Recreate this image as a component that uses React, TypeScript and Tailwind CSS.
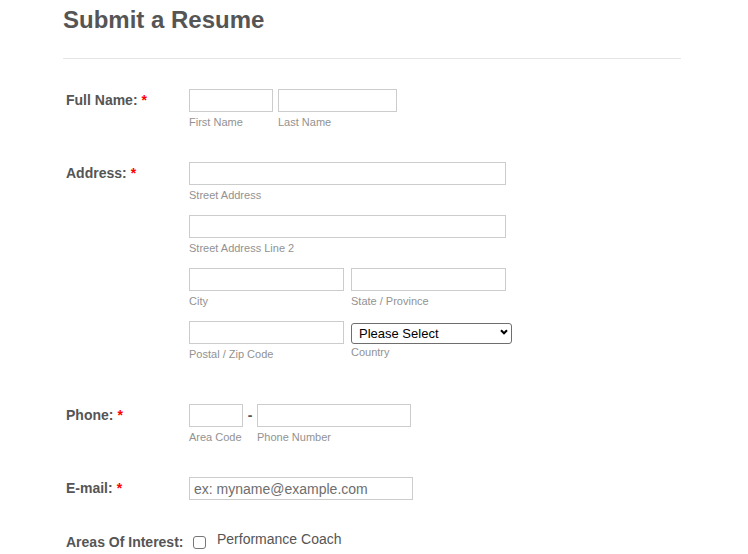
import React from "react";

const Req = () => <span className="text-[#f00] ml-[4px]">*</span>;

const Sub = ({ children, className = "" }: { children: React.ReactNode; className?: string }) => (
  <div className={`text-[11px] leading-[14px] text-[#929292] whitespace-nowrap ${className}`}>{children}</div>
);

const Field = ({ w, label }: { w: string; label: string }) => (
  <div className="flex flex-col">
    <input type="text" className={`${w} h-[23px] border border-[#cccccc] bg-white outline-none`} />
    <Sub className="mt-[3px]">{label}</Sub>
  </div>
);

const Label = ({ children, pt = "pt-[3px]" }: { children: React.ReactNode; pt?: string }) => (
  <div className={`w-[126px] shrink-0 pl-[3px] ${pt} text-[14px] leading-[17px] font-bold text-[#555] whitespace-nowrap`}>
    {children}
  </div>
);

export default function App() {
  return (
    <div className="w-[748px] h-[554px] overflow-hidden bg-white pl-[63px] font-['Liberation_Sans',Arial,sans-serif]">
      <h1 className="pt-[6px] text-[24px] leading-[28px] font-bold text-[#555]">Submit a Resume</h1>
      <div className="mt-[24px] w-[618px] h-px bg-[#e5e5e5]" />

      {/* Full Name */}
      <div className="mt-[30px] flex">
        <Label>
          Full Name:<Req />
        </Label>
        <div className="flex gap-[5px]">
          <Field w="w-[84px]" label="First Name" />
          <Field w="w-[119px]" label="Last Name" />
        </div>
      </div>

      {/* Address */}
      <div className="mt-[33px] flex">
        <Label>
          Address:<Req />
        </Label>
        <div className="flex flex-col gap-[13px]">
          <Field w="w-[317px]" label="Street Address" />
          <Field w="w-[317px]" label="Street Address Line 2" />
          <div className="flex gap-[7px]">
            <Field w="w-[155px]" label="City" />
            <Field w="w-[155px]" label="State / Province" />
          </div>
          <div className="flex gap-[7px] items-start">
            <Field w="w-[155px]" label="Postal / Zip Code" />
            <div className="flex flex-col">
              <div className="relative w-[161px] h-[21px]">
                <select className="appearance-none w-full h-full border border-[#6e6e6e] rounded-[3px] bg-white pl-[7px] text-[13px] leading-[19px] text-black outline-none">
                  <option>Please Select</option>
                </select>
                <svg
                  className="absolute right-[4px] top-[8px] pointer-events-none"
                  width="8"
                  height="6"
                  viewBox="0 0 8 6"
                >
                  <path d="M1 1.2 L4 4.3 L7 1.2" fill="none" stroke="#000" strokeWidth="2" />
                </svg>
              </div>
              <Sub className="mt-[3px]">Country</Sub>
            </div>
          </div>
        </div>
      </div>

      {/* Phone */}
      <div className="mt-[43px] flex">
        <Label>
          Phone:<Req />
        </Label>
        <div className="flex items-start">
          <Field w="w-[54px]" label="Area Code" />
          <div className="w-[14px] h-[23px] leading-[23px] text-center text-[14px] font-bold text-[#555]">-</div>
          <Field w="w-[154px]" label="Phone Number" />
        </div>
      </div>

      {/* E-mail */}
      <div className="mt-[33px] flex">
        <Label pt="pt-[3px]">
          E-mail:<Req />
        </Label>
        <input
          type="text"
          placeholder="ex: myname@example.com"
          className="w-[224px] h-[23px] border border-[#cccccc] bg-white pl-[4px] text-[14px] text-[#333] placeholder:text-[#6e6e6e] outline-none"
        />
      </div>

      {/* Areas Of Interest */}
      <div className="mt-[31px] flex">
        <Label>Areas Of Interest:</Label>
        <div className="flex items-start">
          <input
            type="checkbox"
            className="appearance-none ml-[4px] mt-[5px] w-[13px] h-[13px] border border-[#767676] rounded-[3px] bg-white"
          />
          <span className="ml-[11px] text-[14px] leading-[17px] text-[#555]">Performance Coach</span>
        </div>
      </div>
    </div>
  );
}
